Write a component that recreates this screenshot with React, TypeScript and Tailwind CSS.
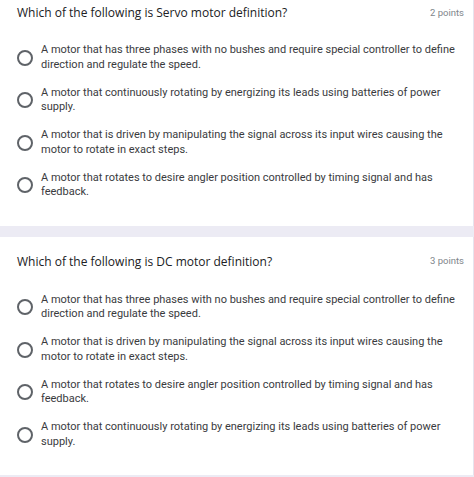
const servoOptions = [
  "A motor that has three phases with no bushes and require special controller to define direction and regulate the speed.",
  "A motor that continuously rotating by energizing its leads using batteries of power supply.",
  "A motor that is driven by manipulating the signal across its input wires causing the motor to rotate in exact steps.",
  "A motor that rotates to desire angler position controlled by timing signal and has feedback.",
];

const dcOptions = [
  "A motor that has three phases with no bushes and require special controller to define direction and regulate the speed.",
  "A motor that is driven by manipulating the signal across its input wires causing the motor to rotate in exact steps.",
  "A motor that rotates to desire angler position controlled by timing signal and has feedback.",
  "A motor that continuously rotating by energizing its leads using batteries of power supply.",
];

function Question({ title, points, options, top, gap }: { title: string; points: string; options: string[]; top: string; gap: string }) {
  return (
    <div className={"bg-white pl-[17px] pr-[9px] pb-[26px] border-r border-[#e6e4ee] " + top}>
      <div className="flex items-center justify-between h-5">
        <span className="text-[12px] text-[#202124] font-['Open_Sans',sans-serif]">{title}</span>
        <span className="text-[9.5px] text-[#80868b] font-['Roboto',sans-serif]">{points}</span>
      </div>
      <div className={"flex flex-col gap-[13.5px] " + gap}>
        {options.map((o, i) => (
          <div key={i} className="flex items-center">
            <div className="w-[16px] h-[16px] -ml-[0.5px] rounded-full border-2 border-[#5f6368] shrink-0" />
            <div className="ml-[8.5px] w-[422px] text-[11px] leading-[14.5px] text-[#3a3b3e] font-['Roboto',sans-serif]">{o}</div>
          </div>
        ))}
      </div>
    </div>
  );
}

export default function App() {
  return (
    <div className="w-[474px] h-[477px] overflow-hidden bg-[#ecebf4]">
      <Question title="Which of the following is Servo motor definition?" points="2 points" options={servoOptions} top="pt-[3px]" gap="mt-[20px]" />
      <div className="h-[11px]" />
      <Question title="Which of the following is DC motor definition?" points="3 points" options={dcOptions} top="pt-[15px]" gap="mt-[21px]" />
    </div>
  );
}
